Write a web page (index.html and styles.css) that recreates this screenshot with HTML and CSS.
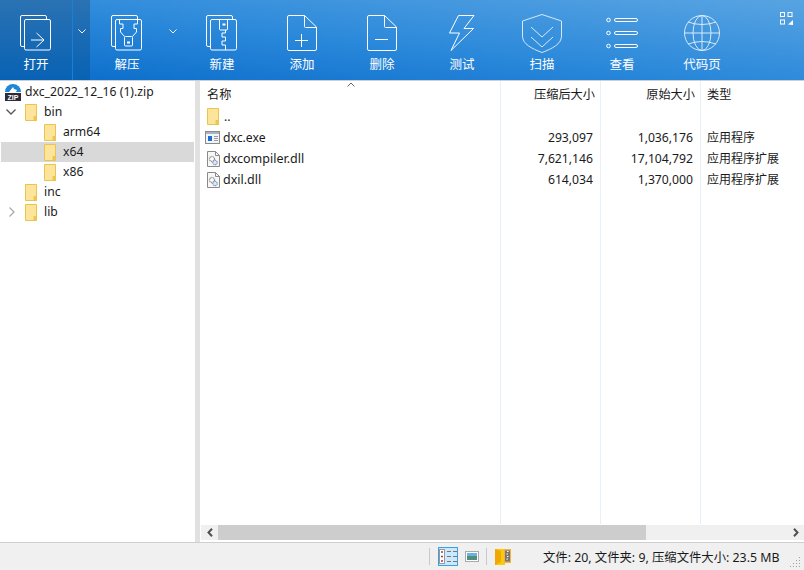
FILE: index.html
```html
<!DOCTYPE html>
<html lang="zh">
<head>
<meta charset="utf-8">
<title>dxc_2022_12_16 (1).zip</title>
<link rel="stylesheet" href="styles.css">
</head>
<body>
<svg class="defs" width="0" height="0">
  <symbol id="folder" viewBox="0 0 12 17">
    <path d="M.5.500h11v16H.5z" fill="#fde49b" stroke="#ebc44f"/>
    <path d="M9 16.500v-4h2.500v4z" fill="#f0c94f" stroke="#ebc44f"/>
  </symbol>
  <symbol id="dll" viewBox="0 0 13 16">
    <path d="M.5.500h8l4 4v11H.5z" fill="#f7f7f7" stroke="#8a8a8a"/>
    <path d="M8.500.5v4h4" fill="none" stroke="#8a8a8a"/>
    <circle cx="5" cy="8" r="2.500" fill="#fff" stroke="#8c8c8c" stroke-width="1.300" stroke-dasharray="1.200 .6"/>
    <circle cx="8" cy="11.500" r="2.200" fill="#dfe9f5" stroke="#7b93b4" stroke-width="1.200" stroke-dasharray="1.200 .6"/>
  </symbol>
</svg>

<header class="toolbar">
  <div class="open-group">
    <button class="tool tool-open">
      <svg class="ico" width="32" height="36" viewBox="0 0 32 36" fill="none" stroke="#fff"><path d="M4 31.500H2A1.500 1.500 0 0 1 .5 30V2A1.500 1.500 0 0 1 2 .5h23A1.500 1.500 0 0 1 26.500 2v2.500"/><rect x="4.500" y="4.500" width="26" height="30.500" rx="1.500"/><path d="M11 25h13M16.500 18l7.500 7-7.500 7"/></svg>
      <span>打开</span>
    </button>
    <button class="caret caret-open"><svg width="8" height="5" viewBox="0 0 8 5" fill="none" stroke="#fff"><path d="M.5.500 4 4 7.500.5"/></svg></button>
  </div>
  <button class="tool tool-extract">
    <svg class="ico" width="32" height="36" viewBox="0 0 32 36" fill="none" stroke="#fff"><path d="M4 31.500H2A1.500 1.500 0 0 1 .5 30V2A1.500 1.500 0 0 1 2 .5h23A1.500 1.500 0 0 1 26.500 2v2.500"/><rect x="4.500" y="4.500" width="26" height="30.500" rx="1.500"/><path d="M8.500 4.500V9h3.500v4.500H9.500v3.500l4 4.500M26.500 4.500V9H23v4.500h2.500v3.500l-4 4.500"/><rect x="13.500" y="21.500" width="8" height="9.500" rx="1"/><rect x="16" y="26.500" width="3" height="2" fill="#fff" stroke="none"/></svg>
    <span>解压</span>
  </button>
  <button class="caret caret-extract"><svg width="8" height="5" viewBox="0 0 8 5" fill="none" stroke="#fff"><path d="M.5.500 4 4 7.500.5"/></svg></button>
  <button class="tool">
    <svg class="ico" width="32" height="36" viewBox="0 0 32 36" fill="none" stroke="#fff"><path d="M4 31.500H2A1.500 1.500 0 0 1 .5 30V2A1.500 1.500 0 0 1 2 .5h23A1.500 1.500 0 0 1 26.500 2v2.500"/><rect x="4.500" y="4.500" width="26" height="30.500" rx="1.500"/><path d="M13.500 4.500v9.500q0 1 1 1h6q1 0 1-1V4.500M19.500 15v3h-3.500v4h3.500v4h-3.500v4h3.500v5"/><rect x="16.500" y="8.500" width="3" height="2" fill="#fff" stroke="none"/></svg>
    <span>新建</span>
  </button>
  <button class="tool">
    <svg class="ico" width="30" height="36" viewBox="0 0 30 36" fill="none" stroke="#fff"><path d="M2 .5h15.500L29.500 12v22a1.500 1.500 0 0 1-1.500 1.500H2A1.500 1.500 0 0 1 .5 34V2A1.500 1.500 0 0 1 2 .5z"/><path d="M17.500.5v11a1 1 0 0 0 1 1h11M8 25.500h13M14.500 19v13"/></svg>
    <span>添加</span>
  </button>
  <button class="tool">
    <svg class="ico" width="30" height="36" viewBox="0 0 30 36" fill="none" stroke="#fff"><path d="M2 .5h15.500L29.500 12v22a1.500 1.500 0 0 1-1.500 1.500H2A1.500 1.500 0 0 1 .5 34V2A1.500 1.500 0 0 1 2 .5z"/><path d="M17.500.5v11a1 1 0 0 0 1 1h11M8 24.500h13"/></svg>
    <span>删除</span>
  </button>
  <button class="tool">
    <svg class="ico" width="26" height="36" viewBox="0 0 26 36" fill="none" stroke="#fff"><path d="M9.500.5h15.500L15 13.500h9.500L2 35.500 10.500 18H.5z"/></svg>
    <span>测试</span>
  </button>
  <button class="tool">
    <svg class="ico ico-shield" width="40" height="39" viewBox="0 0 40 39" fill="none" stroke="#fff"><path d="M20 .5 39.500 7v15c0 8-9 12.500-19.500 16.500C9.500 34.500.5 30 .5 22V7z"/><path d="M9 13l11 10 11-10M9 23l11 10 11-10"/></svg>
    <span>扫描</span>
  </button>
  <button class="tool">
    <svg class="ico" width="32" height="36" viewBox="0 0 32 36" fill="none" stroke="#fff"><circle cx="2.500" cy="5" r="1.800"/><circle cx="2.500" cy="18" r="1.800"/><circle cx="2.500" cy="31" r="1.800"/><rect x="8.500" y="3.500" width="23" height="3" rx="1.500"/><rect x="8.500" y="16.500" width="23" height="3" rx="1.500"/><rect x="8.500" y="29.500" width="23" height="3" rx="1.500"/></svg>
    <span>查看</span>
  </button>
  <button class="tool">
    <svg class="ico ico-soft" width="36" height="36" viewBox="0 0 36 36" fill="none" stroke="#fff"><circle cx="18" cy="18" r="17.500"/><ellipse cx="18" cy="18" rx="9" ry="17.500"/><path d="M18 .5v35M.5 18h35M4 7q14 5 28 0M4 29q14-5 28 0"/></svg>
    <span>代码页</span>
  </button>
  <svg class="layout-ico" width="13" height="13" viewBox="0 0 13 13" fill="none" stroke="#fff"><rect x=".5" y=".5" width="4" height="4"/><rect x="8" y=".5" width="4" height="4"/><rect x=".5" y="8" width="4" height="4"/><path d="M8 12.500 13 8v5z" fill="#fff" stroke="none"/></svg>
</header>

<main class="main">
  <nav class="tree">
    <div class="node">
      <svg class="zip-ico" width="18" height="17" viewBox="0 0 18 17"><path d="M1 8a8 8 0 0 1 16 0z" fill="#1f86d8"/><path d="M5 8l4-5 1 2 3 1-1 2z" fill="#fff"/><rect x="1" y="9" width="16" height="8" fill="#2b2b3a"/><text x="9" y="16" class="zip-text">ZIP</text></svg>
      <span>dxc_2022_12_16 (1).zip</span>
    </div>
    <div class="node depth1">
      <svg class="exp" width="10" height="6" viewBox="0 0 10 6" fill="none" stroke="#555" stroke-width="1.300"><path d="M.5.500 5 5 9.500.5"/></svg>
      <svg class="folder"><use href="#folder"/></svg><span>bin</span>
    </div>
    <div class="node depth2"><svg class="folder"><use href="#folder"/></svg><span>arm64</span></div>
    <div class="node depth2 selected"><svg class="folder"><use href="#folder"/></svg><span>x64</span></div>
    <div class="node depth2"><svg class="folder"><use href="#folder"/></svg><span>x86</span></div>
    <div class="node depth1 noexp"><svg class="folder"><use href="#folder"/></svg><span>inc</span></div>
    <div class="node depth1">
      <svg class="exp exp-right" width="6" height="10" viewBox="0 0 6 10" fill="none" stroke="#aaa" stroke-width="1.300"><path d="M.5.500 5 5 .5 9.500"/></svg>
      <svg class="folder"><use href="#folder"/></svg><span>lib</span>
    </div>
  </nav>
  <div class="splitter"></div>
  <section class="list">
    <div class="columns">
      <div class="col-line l1"></div><div class="col-line l2"></div><div class="col-line l3"></div>
    </div>
    <div class="row head">
      <div class="c-name">名称<svg class="sort" width="8" height="5" viewBox="0 0 8 5" fill="none" stroke="#666"><path d="M.5 4.500 4 1l3.500 3.500"/></svg></div>
      <div class="c-num">压缩后大小</div>
      <div class="c-num">原始大小</div>
      <div class="c-type">类型</div>
    </div>
    <div class="rows">
      <div class="row">
        <div class="c-name"><svg class="folder list-folder"><use href="#folder"/></svg><span>..</span></div>
        <div class="c-num"></div><div class="c-num"></div><div class="c-type"></div>
      </div>
      <div class="row">
        <div class="c-name">
          <svg class="file-ico" width="15" height="13" viewBox="0 0 15 13"><rect x=".5" y=".5" width="14" height="12" fill="#f2f4f7" stroke="#8a8a8a"/><path d="M1 1h13v2H1z" fill="#a9b4c2"/><rect x="3" y="5" width="4" height="5" fill="#1a6fd0"/><path d="M9 5.500h4M9 7.500h4M9 9.500h4" stroke="#9a9a9a"/></svg>
          <span>dxc.exe</span>
        </div>
        <div class="c-num">293,097</div><div class="c-num">1,036,176</div><div class="c-type">应用程序</div>
      </div>
      <div class="row">
        <div class="c-name"><svg class="file-ico dll"><use href="#dll"/></svg><span class="dll-name">dxcompiler.dll</span></div>
        <div class="c-num">7,621,146</div><div class="c-num">17,104,792</div><div class="c-type">应用程序扩展</div>
      </div>
      <div class="row">
        <div class="c-name"><svg class="file-ico dll"><use href="#dll"/></svg><span class="dll-name">dxil.dll</span></div>
        <div class="c-num">614,034</div><div class="c-num">1,370,000</div><div class="c-type">应用程序扩展</div>
      </div>
    </div>
    <div class="hscroll">
      <div class="arrow"><svg width="6" height="9" viewBox="0 0 6 9" fill="none" stroke="#505050" stroke-width="2"><path d="M5 .8 1.500 4.500 5 8.200"/></svg></div>
      <div class="thumb"></div>
      <div class="track"></div>
      <div class="arrow"><svg width="6" height="9" viewBox="0 0 6 9" fill="none" stroke="#505050" stroke-width="2"><path d="M1 .8 4.500 4.500 1 8.200"/></svg></div>
    </div>
  </section>
</main>

<footer class="status">
  <div class="sep"></div>
  <div class="view-btn active">
    <svg width="19" height="15" viewBox="0 0 19 15" fill="none"><rect x=".5" y=".5" width="5" height="14" fill="#fff" stroke="#999"/><path d="M2 3h2M2 7.500h2M2 12h2" stroke="#b33" stroke-width="1.500"/><path d="M8 2.500h4M14 2.500h4M8 7.500h4M14 7.500h4M8 12.500h4M14 12.500h4" stroke="#777"/></svg>
  </div>
  <div class="view-btn">
    <svg width="14" height="11" viewBox="0 0 14 11"><rect x=".5" y=".5" width="13" height="10" fill="#fff" stroke="#aaa"/><rect x="2" y="2" width="10" height="3" fill="#6cb2e0"/><rect x="2" y="5" width="10" height="4" fill="#4f8f80"/></svg>
  </div>
  <div class="sep sep2"></div>
  <svg class="status-folder" width="16" height="18" viewBox="0 0 16 18"><path d="M0 1h10v16H0z" fill="#fdc90f"/><path d="M0 17 6 14V3L0 1z" fill="#f0a804"/><rect x="9" y="1" width="7" height="14" fill="#f4b33a"/><rect x="10" y="2.500" width="5" height="11" fill="#777"/><path d="M12 3.500h1.500M11.500 6h1.500M12 8.500h1.500M11.500 11h1.500" stroke="#fff"/></svg>
  <div class="summary">文件: 20, 文件夹: 9, 压缩文件大小: 23.5 MB</div>
  <svg class="grip" width="12" height="12" viewBox="0 0 12 12" fill="#a0a0a0"><rect x="9" y="1" width="1" height="1"/><rect x="6" y="4" width="1" height="1"/><rect x="9" y="4" width="1" height="1"/><rect x="3" y="7" width="1" height="1"/><rect x="6" y="7" width="1" height="1"/><rect x="9" y="7" width="1" height="1"/><rect x="0" y="10" width="1" height="1"/><rect x="3" y="10" width="1" height="1"/><rect x="6" y="10" width="1" height="1"/><rect x="9" y="10" width="1" height="1"/></svg>
</footer>
</body>
</html>
```
FILE: styles.css
```css
* { box-sizing: border-box; }
html, body { margin: 0; height: 100%; }
body {
  width: 804px; height: 570px; overflow: hidden;
  display: flex; flex-direction: column;
  font: 12.2px "Noto Sans", "Noto Sans CJK SC", sans-serif;
  color: #1a1a1a; background: #fff;
}
.defs { position: absolute; }
button { border: 0; padding: 0; background: none; color: inherit; font: inherit; }

.toolbar {
  flex: 0 0 80px; display: flex; position: relative;
  background: linear-gradient(to top right, #0a6cca 0%, #2a88da 45%, #58a4e2 100%);
  color: #fff;
}
.open-group {
  display: flex; flex: 0 0 90px;
  background: linear-gradient(to bottom, #2a72b3, #0862b4);
}
.tool {
  width: 80px; flex: none; display: flex; flex-direction: column; align-items: center;
  padding-top: 15px; font-size: 12.5px; line-height: 17px;
}
.tool .ico { margin-bottom: 5px; flex: none; }
.tool .ico-shield { height: 39px; margin-top: -1px; margin-bottom: 3px; opacity: .8; }
.tool .ico-soft { opacity: .8; }
.tool-open { width: 72px; }
.tool-extract { width: 74px; }
.caret { width: 18px; flex: none; display: flex; justify-content: center; padding-top: 29px; }
.caret-open { border-left: 1px solid #1a7fd8; }
.layout-ico { position: absolute; left: 780px; top: 12px; }

.main { flex: 1; min-height: 0; display: flex; border-top: 1px solid #cfcfcf; }
.tree { width: 195px; flex: none; padding-top: 1px; }
.node { height: 20px; display: flex; align-items: center; line-height: 20px; padding-left: 25px; position: relative; margin-left: 1px; margin-right: 1px; }
.node:first-child { padding-left: 3px; }
.zip-ico { margin-right: 3px; }
.depth1 { padding-left: 24px; }
.depth2 { padding-left: 43px; }
.selected { background: #d9d9d9; }
.folder { width: 12px; height: 17px; margin-right: 7px; flex: none; }
.exp { position: absolute; left: 5px; top: 7px; }
.exp-right { left: 8px; top: 5px; }
.zip-text { font: bold 7px "Liberation Sans", sans-serif; fill: #fff; text-anchor: middle; }

.splitter { width: 5px; flex: none; background: #e1e1e1; }
.list { flex: 1; min-width: 0; display: flex; flex-direction: column; position: relative; padding: 1px 0 2px; }
.columns { position: absolute; inset: 0 0 18px 0; }
.col-line { position: absolute; top: 0; bottom: 0; width: 1px; background: #e6f0fb; }
.col-line.l1 { left: 300px; } .col-line.l2 { left: 400px; } .col-line.l3 { left: 500px; }
.row { display: flex; height: 21px; line-height: 21px; position: relative; }
.rows { flex: 1; margin-top: -2px; }
.head { height: 26px; line-height: 26px; }
.c-name { width: 300px; flex: none; display: flex; align-items: center; padding-left: 7px; position: relative; }
.c-num { width: 100px; flex: none; text-align: right; padding-right: 7px; }
.head .c-num { padding-right: 5px; }
.c-type { flex: 1; padding-left: 7px; font-size: 12px; }
.head .c-type { font-size: 12.2px; }
.sort { position: absolute; left: 147px; top: 0; }
.file-ico { margin-left: -2px; margin-right: 3px; flex: none; }
.dll { width: 13px; height: 16px; margin-left: 0; margin-right: 3px; }
.dll-name { font-size: 12.5px; }
.folder.list-folder { margin-right: 5px; }

.hscroll { height: 15px; flex: none; display: flex; background: #f0f0f0; margin-left: 1px; position: relative; }
.arrow { width: 17px; flex: none; display: flex; align-items: center; justify-content: center; }
.thumb { width: 428px; background: #cdcdcd; }
.track { flex: 1; }

.status {
  flex: 0 0 28px; display: flex; align-items: center; position: relative;
  background: #f0f0f0; border-top: 1px solid #cfcfcf; padding-left: 429px;
}
.sep { width: 1px; height: 17px; background: #c9c9c9; }
.view-btn { width: 20px; height: 19px; display: flex; align-items: center; justify-content: center; }
.view-btn.active { margin-left: 8px; background: #cce8ff; outline: 1px solid #3d9fe0; outline-offset: -1px; }
.view-btn + .view-btn { margin-left: 4px; }
.sep2 { margin-left: 4px; }
.status-folder { margin-left: 8px; }
.summary { margin-left: 32px; white-space: nowrap; font-size: 12.35px; }
.grip { position: absolute; right: 2px; bottom: 2px; }
```
